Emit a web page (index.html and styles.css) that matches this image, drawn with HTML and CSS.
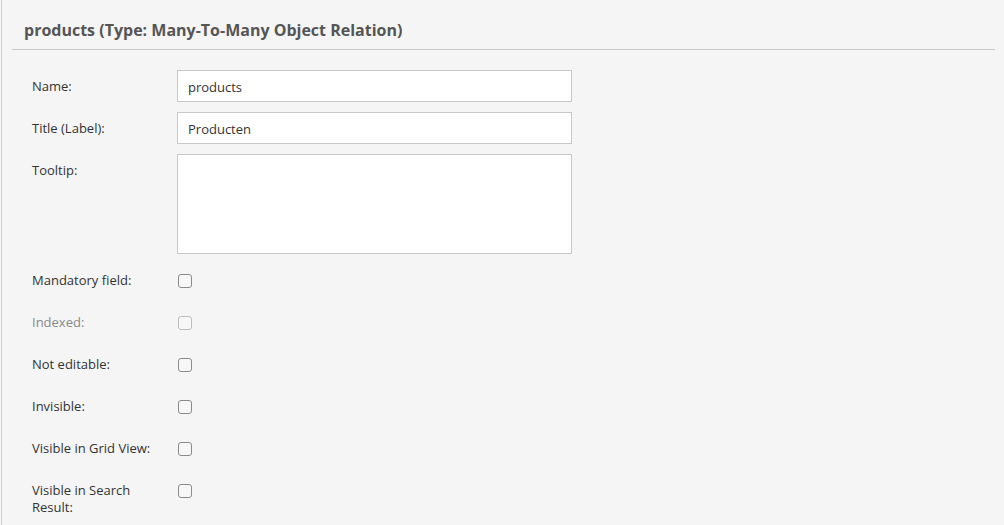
FILE: index.html
```html
<!DOCTYPE html>
<html lang="en">
<head>
    <meta charset="UTF-8">
    <title>products - Field settings</title>
    <link rel="stylesheet" href="styles.css">
</head>
<body>
    <div class="panel">
        <div class="panel-header">products (Type: Many-To-Many Object Relation)</div>
        <form class="panel-body">
            <div class="row">
                <label class="field-label">Name:</label>
                <input class="text-field" type="text" value="products">
            </div>
            <div class="row">
                <label class="field-label">Title (Label):</label>
                <input class="text-field" type="text" value="Producten">
            </div>
            <div class="row">
                <label class="field-label">Tooltip:</label>
                <textarea class="text-field text-area"></textarea>
            </div>
            <div class="row">
                <label class="field-label">Mandatory field:</label>
                <div class="check-wrap"><input class="check" type="checkbox"></div>
            </div>
            <div class="row disabled">
                <label class="field-label">Indexed:</label>
                <div class="check-wrap"><input class="check" type="checkbox" disabled></div>
            </div>
            <div class="row">
                <label class="field-label">Not editable:</label>
                <div class="check-wrap"><input class="check" type="checkbox"></div>
            </div>
            <div class="row">
                <label class="field-label">Invisible:</label>
                <div class="check-wrap"><input class="check" type="checkbox"></div>
            </div>
            <div class="row">
                <label class="field-label">Visible in Grid View:</label>
                <div class="check-wrap"><input class="check" type="checkbox"></div>
            </div>
            <div class="row">
                <label class="field-label">Visible in Search Result:</label>
                <div class="check-wrap"><input class="check" type="checkbox"></div>
            </div>
        </form>
    </div>
</body>
</html>
```

FILE: styles.css
```css
* {margin:0;padding:0;box-sizing:border-box;font-family:'Open Sans', 'Liberation Sans', sans-serif;}
body {background-color:#f5f5f5;color:#333;overflow:hidden;}
.panel {margin-left:1px;border-left:1px solid #d0d0d0;min-height:525px;padding:0 9px 0 10px;}
.panel-header {height:50px;padding:19px 0 0 12px;font-size:16px;font-weight:700;color:#555;line-height:22px;border-bottom:1px solid #c8c8c8;}
.panel-body {padding:20px 0 0 20px;}
.row {display:flex;align-items:flex-start;min-height:32px;margin-bottom:10px;}
.field-label {width:145px;flex-shrink:0;padding:8px 10px 0 0;font-size:13px;line-height:17px;color:#333;}
.row.disabled .field-label {color:#888;}
.text-field {width:395px;height:32px;border:1px solid #c8c8c8;background:#fff;padding:1px 10px 0;font-size:13px;color:#333;outline:none;}
.text-area {height:100px;resize:none;padding:6px 10px;}
.check-wrap {height:32px;display:flex;align-items:center;padding-left:1px;}
.check {appearance:none;-webkit-appearance:none;width:14px;height:14px;border:1px solid #8a8a8a;border-radius:3px;background:#f7f7f7;margin-top:1px;}
.check:disabled {border-color:#bdbdbd;}
```
